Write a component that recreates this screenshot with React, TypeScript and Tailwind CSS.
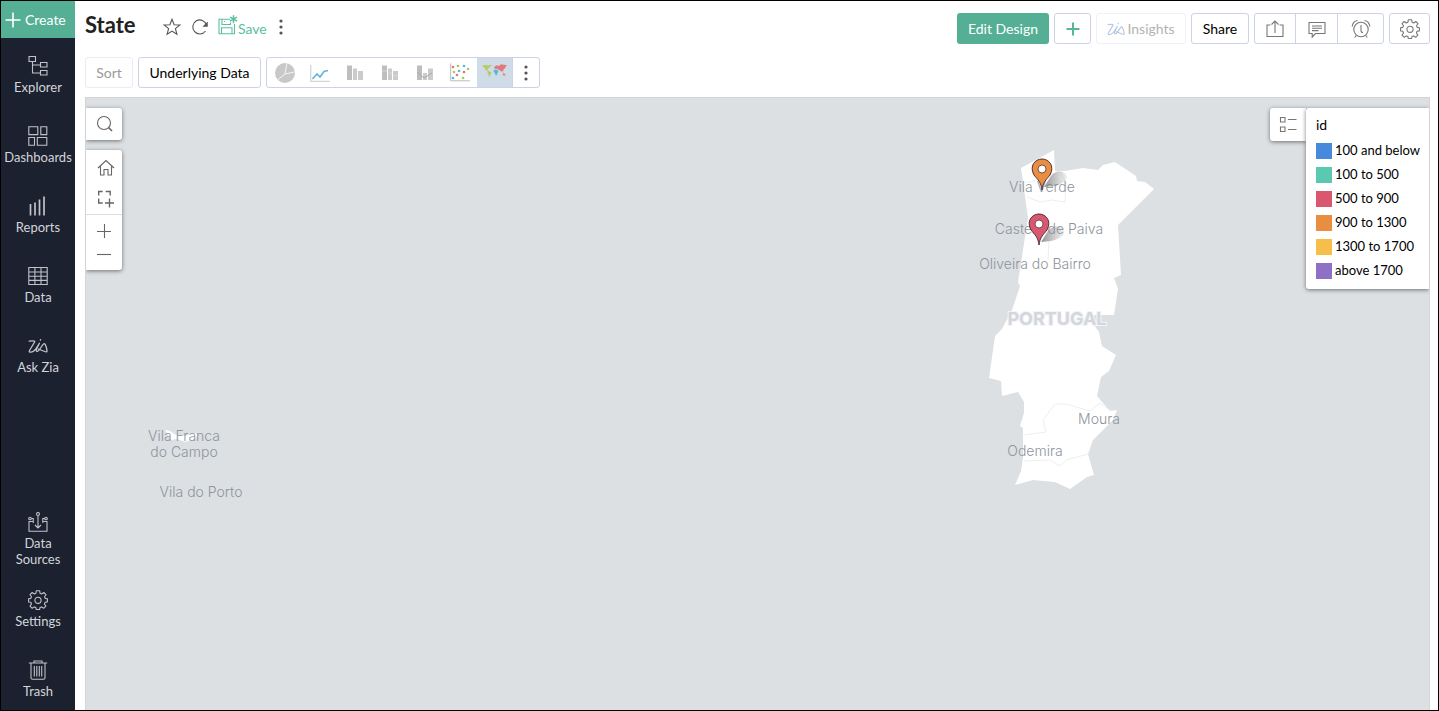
import type { ReactNode } from "react";

type IconProps = { className?: string };

function Svg({ children, box = "0 0 20 20", className = "size-5" }: { children: ReactNode; box?: string; className?: string }) {
  return (
    <svg viewBox={box} className={className} fill="none" stroke="currentColor" strokeWidth="1.1" aria-hidden="true">
      {children}
    </svg>
  );
}

function ExplorerIcon() {
  return (
    <Svg>
      <path d="M1 .5h6.5v5H1zM12.500 6.500h6.500v4.500h-6.500zM12.500 14.500h6.500v4.500h-6.500zM4.500 5.500v11.500h8M4.500 9h8" />
    </Svg>
  );
}

function DashboardsIcon() {
  return (
    <Svg>
      <path d="M.8.800h9v7.800h-9zM12.800.8h6v7.800h-6zM.8 11.500h5.700v7.700H.8zM9.300 11.500h9.500v7.700H9.300z" />
    </Svg>
  );
}

function ReportsIcon() {
  return (
    <Svg>
      <path strokeWidth="1.700" d="M2.500 8v11.500M7 6.500v13M11.500 3.500v16M16 .5v19" />
    </Svg>
  );
}

function TableIcon() {
  return (
    <Svg>
      <path d="M.8 1.500h18.400v17H.8zM.8 6h18.400M.8 10.200h18.400M.8 14.400h18.400M6.900 1.500v17M13 1.500v17" />
    </Svg>
  );
}

function ZiaIcon({ className = "size-5" }: IconProps) {
  return (
    <Svg className={className}>
      <path
        strokeWidth="1.300"
        strokeLinecap="round"
        strokeLinejoin="round"
        d="M1.200 5.200c2-.4 4-.4 5.200-.1.600.2.300.8-.1 1.400L1.500 14.500c-.6 1.200-.1 1.700 1 1.700 2.800 0 5-2.600 6.700-5.400l2.200-3.500-2.700 5.400c-.8 1.700-.5 2.900.7 2.600 2.800-.6 5-8 7-7.600 1.300.4 2.500 5.300 2.600 7.500 0 1-1.200.8-2.300.3l-6.300-2.500M12.300 4.200l.3-.5"
      />
    </Svg>
  );
}

function SourcesIcon() {
  return (
    <Svg>
      <path d="M4.500 9.500H1v9.700h18V9.500h-3.500M10 3.700v12.300M7 13l3 3 3-3M3.200 6.500h2v4.500M16.800 6.500h-2v4.500" />
      <circle cx="10" cy="2" r="1.500" />
      <circle cx="2" cy="6.500" r="1.300" />
      <circle cx="18" cy="6.500" r="1.300" />
    </Svg>
  );
}

function GearIcon() {
  return (
    <Svg>
      <path
        strokeLinejoin="round"
        d="M8.300.8h3.400l.4 2.500 1.600.7 2.100-1.500 2.200 2.200-1.500 2.100.7 1.600 2.200.4v3.100l-2.300.4-.7 1.700 1.500 2.100-2.300 2.200-2-1.400-1.600.6-.4 2.100H8.300l-.4-2.100-1.600-.6-2.100 1.400-2.200-2.200 1.500-2.100-.7-1.700L.6 12V8.800L2.800 8.400l.7-1.600L2 4.700l2.200-2.200L6.300 4l1.600-.7z"
      />
      <circle cx="10" cy="10.300" r="3.100" />
    </Svg>
  );
}

function TrashIcon() {
  return (
    <Svg>
      <path d="M.8 3h18.400M6 3V1h8v2M3 3v14.700c0 1 .6 1.500 1.500 1.500h11c.9 0 1.500-.5 1.500-1.500V3M6.300 6v10.500M8.800 6v10.500M11.300 6v10.500M13.700 6v10.500" />
    </Svg>
  );
}

function NavItem({ label, children, className = "" }: { label: string; children: ReactNode; className?: string }) {
  return (
    <a href="#" className={`flex w-full flex-col items-center gap-[3px] text-center text-[13px] leading-4 text-[#d2d5da] ${className}`}>
      <span className="text-[#bfc2c8]">{children}</span>
      {label}
    </a>
  );
}

function Sidebar() {
  return (
    <aside className="flex w-[74px] shrink-0 flex-col bg-[#1c2130]">
      <button type="button" className="flex h-[37px] shrink-0 items-center gap-1 bg-[#54af94] pl-1 text-sm text-white">
        <Svg box="0 0 16 16" className="size-4">
          <path strokeWidth="1.600" d="M8 .5v15M.5 8h15" />
        </Svg>
        Create
      </button>
      <nav className="flex flex-1 flex-col pt-[18px] pb-[11px]">
        <div className="flex flex-col gap-[31px]">
          <NavItem label="Explorer"><ExplorerIcon /></NavItem>
          <NavItem label="Dashboards"><DashboardsIcon /></NavItem>
          <NavItem label="Reports"><ReportsIcon /></NavItem>
          <NavItem label="Data"><TableIcon /></NavItem>
          <NavItem label="Ask Zia"><ZiaIcon /></NavItem>
        </div>
        <div className="mt-auto flex flex-col">
          <NavItem label="Data Sources" className="mb-[23px] px-3"><SourcesIcon /></NavItem>
          <NavItem label="Settings" className="mb-[31px]"><GearIcon /></NavItem>
          <NavItem label="Trash"><TrashIcon /></NavItem>
        </div>
      </nav>
    </aside>
  );
}

function Dots() {
  return (
    <svg viewBox="0 0 4 18" className="h-[18px] w-1" fill="#555" aria-hidden="true">
      <circle cx="2" cy="3" r="1.600" />
      <circle cx="2" cy="9" r="1.600" />
      <circle cx="2" cy="15" r="1.600" />
    </svg>
  );
}

function TitleBar() {
  return (
    <div className="flex h-[31px] items-start">
      <div className="flex h-7 items-center">
        <h1 className="w-[78px] pb-1 text-[22px] leading-6 font-bold text-[#222]">State</h1>
        <button type="button" aria-label="Favourite" className="mr-2.5 text-[#555]">
          <Svg box="0 0 18 18" className="size-[18px]">
            <path d="M9 1.300l2.100 5.400 5.800.3-4.500 3.600 1.500 5.600L9 13.100l-4.900 3.100 1.500-5.600L1.100 7l5.800-.3z" />
          </Svg>
        </button>
        <button type="button" aria-label="Refresh" className="mr-[9px] text-[#555]">
          <Svg box="0 0 18 18" className="size-[18px]">
            <path d="M14.500 13A7 7 0 1 1 15.500 7" />
            <path fill="currentColor" strokeWidth=".5" d="M16.500 4v4.500H12z" />
          </Svg>
        </button>
        <button type="button" className="mr-3 flex items-center text-sm text-[#5bbf9f]">
          <Svg className="mb-1 size-5">
            <path d="M12 4.200H1v14.500h15.500V9M4 4.500v5h8.500v-2M3.500 18.500v-5.800H14v5.800M6 6.500h1" />
            <path strokeWidth="1.500" d="M15.500.2v8M12 2.200l7 4M12 6.200l7-4" />
          </Svg>
          <span className="pt-1">Save</span>
        </button>
        <button type="button" aria-label="More"><Dots /></button>
      </div>
      <Actions />
    </div>
  );
}

function Actions() {
  const box = "flex h-[31px] items-center justify-center rounded-[3px] border border-[#ccd3e8]";
  return (
    <div className="ml-auto flex gap-[5px] text-sm">
      <button type="button" className="flex h-[31px] w-[92px] items-center justify-center rounded-[3px] bg-[#54af94] text-white">Edit Design</button>
      <button type="button" aria-label="Add" className={`${box} w-[37px] text-[#54b799]`}>
        <Svg box="0 0 14 14" className="size-3.5"><path strokeWidth="2" d="M7 .5v13M.5 7h13" /></Svg>
      </button>
      <button type="button" disabled className="flex h-[31px] w-[90px] items-center justify-center gap-0.5 rounded-[3px] border border-[#eff1f8] text-[#b3b3b3]">
        <ZiaIcon className="size-[18px] text-[#b6c8e3]" />
        Insights
      </button>
      <button type="button" className={`${box} w-[58px] text-black`}>Share</button>
      <div className={`${box} text-[#777]`}>
        <button type="button" aria-label="Export" className="flex h-full w-10 items-center justify-center">
          <Svg><path d="M5.500 6H2v11.500h16V6h-3.500M10 14V2M6.500 5.500L10 2l3.500 3.500" /></Svg>
        </button>
        <button type="button" aria-label="Comments" className="flex h-full w-[42px] items-center justify-center border-l border-[#ccd3e8]">
          <Svg>
            <path d="M2 3.500h16v11H8.500l-3.300 3.500v-3.500H2zM5 7h10M5 9.300h10M5 11.600h6.500" />
          </Svg>
        </button>
        <button type="button" aria-label="Schedule" className="flex h-full w-[46px] items-center justify-center border-l border-[#ccd3e8]">
          <Svg>
            <circle cx="10" cy="10.500" r="7.200" />
            <path d="M10 6v5.500c0 1.500.8 2 2 2M1.200 7.500C1.500 4.500 3.500 2 6.500 1.500M18.800 7.500c-.3-3-2.300-5.500-5.300-6M5.300 16.500l-1.600 2M14.700 16.500l1.600 2" />
          </Svg>
        </button>
      </div>
      <button type="button" aria-label="Settings" className={`${box} w-[41px] text-[#777]`}><GearIcon /></button>
    </div>
  );
}

function PieIcon() {
  return (
    <svg viewBox="0 0 20 20" className="size-5" aria-hidden="true">
      <circle cx="10" cy="10" r="10" fill="#c8c8c8" />
      <path d="M10 11L12 0M10 11l9.500-2M10 11l-7.500 6" stroke="#f4f4f4" fill="none" />
    </svg>
  );
}

function LineIcon() {
  return (
    <svg viewBox="0 0 20 20" className="size-5" fill="none" aria-hidden="true">
      <path d="M.7 2v16.300H20" stroke="#d5d5d5" strokeWidth="1.300" />
      <path d="M2.500 16l4.500-5 3 3 4-5.500 4-1" stroke="#5cb6da" strokeWidth="1.600" />
    </svg>
  );
}

function BarIcon({ kind }: { kind: "bar" | "stack" | "combo" }) {
  return (
    <svg viewBox="0 0 20 20" className="size-5" aria-hidden="true">
      <path d="M2 2.500h5V17H2z" fill="#bebebe" />
      <path d={kind === "combo" ? "M8 10h4v7H8zM13 5.500h5V17h-5z" : "M8 5.500h4V17H8zM13 8h5v9h-5z"} fill="#cbcbcb" />
      {kind === "stack" && <path d="M2 8h5M8 10h4M13 12.500h5" stroke="#dedede" strokeWidth=".7" />}
      {kind === "combo" && <path d="M2 9l7 6 8-5" stroke="#aaa" fill="none" />}
    </svg>
  );
}

const scatter = [
  [3, 4, "#e57373"], [8, 3, "#a9c95b"], [14, 3, "#5cb6da"], [18, 6, "#a9c95b"], [4, 9, "#a9c95b"],
  [9, 8, "#5cb6da"], [14, 9, "#e57373"], [7, 12, "#e57373"], [3, 15, "#5cb6da"], [13, 15, "#a9c95b"],
] as const;

function ScatterIcon() {
  return (
    <svg viewBox="0 0 20 20" className="size-5" aria-hidden="true">
      <path d="M.7.500v17.300H20" stroke="#bbb" fill="none" />
      {scatter.map(([x, y, fill]) => <circle key={`${x}-${y}`} cx={x} cy={y} r="1.300" fill={fill} />)}
    </svg>
  );
}

function WorldIcon() {
  return (
    <svg viewBox="0 0 26 16" className="mb-1 h-4 w-[26px]" aria-hidden="true">
      <path fill="#b6cc62" d="M.5 2.500l3-.5 3 .4 2.500-.7 1 .5-1.800 1.600L7 4.800 6 6l-1 .4 1.500 1.600 2.300 1 .6 1.200-1.300 1.700-.6 2.300-.8-.6-.5-2.800-.9-1.500.3-1.200L3.500 7 2.300 4.500.8 3.800z" />
      <path fill="#5cb6da" d="M11.800 7l2.200-.5 1.600.6.8 1.200-.8 1.700-.9 2.300-1 .3-.8-2.700-1.200-1z" />
      <path fill="#e3787a" d="M12 5l1-1.700 1.800-1 2 .6L19 1.300l4.500.7 1.500.7-1.600 1.200-.5 1.600-1.400.8L21.300 8.500l-1.200-.5-.9.8L18 7.200l-1.400-.3-1-1.100-2 .1zM20.500 11l1.700-.6 1.300 1.100-.5 1.100-2-.3zM20 9l1.800.7-.4.5z" />
    </svg>
  );
}

function ChartBar() {
  const cell = "flex h-full w-[35px] items-center justify-center";
  return (
    <div className="mt-[13px] flex h-[31px] gap-[5px] text-sm">
      <button type="button" disabled className="w-12 rounded-[3px] border border-[#e9ecf7] text-[#999]">Sort</button>
      <button type="button" className="w-[123px] rounded-[3px] border border-[#ccd3e8] text-black">Underlying Data</button>
      <div className="flex items-center overflow-hidden rounded-[3px] border border-[#ccd3e8]">
        <button type="button" aria-label="Pie chart" className={cell}><PieIcon /></button>
        <button type="button" aria-label="Line chart" className={cell}><LineIcon /></button>
        <button type="button" aria-label="Bar chart" className={cell}><BarIcon kind="bar" /></button>
        <button type="button" aria-label="Stacked chart" className={cell}><BarIcon kind="stack" /></button>
        <button type="button" aria-label="Combination chart" className={cell}><BarIcon kind="combo" /></button>
        <button type="button" aria-label="Scatter chart" className={cell}><ScatterIcon /></button>
        <button type="button" aria-label="Map chart" aria-pressed="true" className={`${cell} bg-[#d0dbe8]`}><WorldIcon /></button>
        <button type="button" aria-label="More charts" className="flex h-full w-[27px] items-center justify-center border-l border-[#ccd3e8]"><Dots /></button>
      </div>
    </div>
  );
}

const places = [
  { name: "Vila Verde", x: 1042, y: 192 },
  { name: "Castelo de Paiva", x: 1049, y: 234 },
  { name: "Oliveira do Bairro", x: 1035, y: 269 },
  { name: "Moura", x: 1099, y: 424 },
  { name: "Odemira", x: 1035, y: 456 },
  { name: "Vila Franca", x: 184, y: 441 },
  { name: "do Campo", x: 184, y: 457 },
  { name: "Vila do Porto", x: 201, y: 497 },
];

function Pin({ x, y, fill }: { x: number; y: number; fill: string }) {
  return (
    <g transform={`translate(${x} ${y})`}>
      <path d="M2-3L9-14q5-6 12-4 6 3 3 8-4 4-12 6z" fill="url(#pin-shadow)" />
      <path d="M0 0C-1-8-4-10-8-15c-5-9 1-16 8-16s13 7 8 16C4-10 1-8 0 0z" fill={fill} stroke="#54313a" />
      <circle cy="-21" r="4" fill="#fff" stroke="#54313a" strokeWidth=".8" />
    </g>
  );
}

function MapCanvas() {
  return (
    <svg viewBox="86 98 1343 612" preserveAspectRatio="xMidYMid slice" className="absolute inset-0 size-full" role="img" aria-label="Map of Portugal">
      <defs>
        <linearGradient id="pin-shadow" x1="0" y1="0" x2="1" y2="0">
          <stop offset="0" stopColor="#777" stopOpacity=".8" />
          <stop offset="1" stopColor="#999" stopOpacity=".15" />
        </linearGradient>
      </defs>
      <path
        fill="#fff"
        d="M1054 150L1055 171L1065 171L1083 168L1098 170L1103 165L1115 162L1136 176L1137 181L1145 182L1154 189L1118 225L1121 275L1114 278L1118 289L1114 315H1093L1094 325L1099 332L1102 346L1116 355L1109 371L1101 377L1097 396L1110 411L1117 410L1113 420L1093 440L1088 454L1094 475L1087 477L1070 489L1055 482L1033 480L1015 485L1021 471L1023 458V428L1020 426L1024 413V402L1018 392L1002 396L1001 381L989 378L995 336L1002 329L1012 310L1020 286L1018 282L1028 218L1021 168Z"
      />
      <path fill="#fff" d="M165 430l5 1 6 4 9 1 8-3 5 1-3 5-10 3-8-3-6 1z" />
      <path
        fill="none"
        stroke="#eceef0"
        d="M1026 183l14-4 20-8 6 12-1 19-13-2-12 2-13-5M1049 240l-1 20M1024 435l22-3-3-12 12-16h11l24 7 10-8 11 8M1024 461l26-1 10 6 6-6 22-6"
      />
      <text x="1057" y="325" textAnchor="middle" fill="#d3d7dd" stroke="#f3f4f6" strokeWidth="2" paintOrder="stroke" className="font-['Inter',sans-serif] text-[18px] font-bold">
        PORTUGAL
      </text>
      <g fill="#8e949d" textAnchor="middle" className="font-['Inter',sans-serif] text-[14px] font-light">
        {places.map((p) => <text key={p.name} x={p.x} y={p.y}>{p.name}</text>)}
      </g>
      <Pin x={1042} y={190} fill="#e98d41" />
      <Pin x={1039} y={245} fill="#d9576f" />
    </svg>
  );
}

function MapControls() {
  const card = "w-9 rounded-r-[3px] bg-white text-[#666] shadow-[0_1px_4px_rgba(0,0,0,0.5)]";
  return (
    <div className="absolute top-2.5 left-0 flex flex-col gap-2.5">
      <button type="button" aria-label="Search map" className={`${card} flex h-8 items-center justify-center`}>
        <Svg box="0 0 18 18" className="size-[18px]">
          <circle cx="9" cy="8" r="6.500" />
          <path strokeWidth="1.600" d="M13.500 12.500l3.500 3.500" />
        </Svg>
      </button>
      <div className={`${card} flex flex-col`}>
        <button type="button" aria-label="Home" className="flex h-8 items-end justify-center pl-1">
          <Svg box="0 0 18 18" className="mb-[5px] size-[18px]">
            <path d="M1 9l8-7.500L17 9M3.500 7.500V16H7v-5.500h4V16h3.500V7.500" />
          </Svg>
        </button>
        <button type="button" aria-label="Select area" className="flex h-[33px] items-center justify-center border-b border-[#ddd] pt-0.5 pl-1">
          <Svg box="0 0 18 18" className="size-[18px]">
            <path strokeWidth="1.400" d="M1.700 5.500v-4h4M8.700 1.500h4.500v4M1.700 8.500v4.500h4M12.500 8.500v9M8 13h9" />
          </Svg>
        </button>
        <button type="button" aria-label="Zoom in" className="flex h-8 items-center justify-center">
          <Svg box="0 0 14 14" className="size-3.5"><path d="M7.500 0v14M0 7.500h14" /></Svg>
        </button>
        <button type="button" aria-label="Zoom out" className="flex h-[23px] items-start justify-center">
          <Svg box="0 0 14 14" className="size-3.5"><path d="M0 7.500h14" /></Svg>
        </button>
      </div>
    </div>
  );
}

const legend = [
  { label: "100 and below", color: "bg-[#478adb]" },
  { label: "100 to 500", color: "bg-[#5bc8b0]" },
  { label: "500 to 900", color: "bg-[#d9576f]" },
  { label: "900 to 1300", color: "bg-[#e98d41]" },
  { label: "1300 to 1700", color: "bg-[#f6bf4b]" },
  { label: "above 1700", color: "bg-[#8e71c7]" },
];

function Legend() {
  return (
    <div className="absolute top-2.5 right-0 flex items-start">
      <button type="button" aria-label="Toggle legend" className="flex h-[33px] w-9 items-center justify-center rounded-l-[3px] bg-white text-[#777] shadow-[0_1px_4px_rgba(0,0,0,0.5)]">
        <Svg box="0 0 18 18" className="size-[18px]">
          <path d="M1.500 1.500h4.500V6H1.500zM1.500 11h4.500v4.500H1.500zM9 3.500h8.500M9 13.500h8.500" />
        </Svg>
      </button>
      <section className="relative w-[123px] rounded-l-[3px] bg-white px-2.5 pt-[7px] pb-1.5 text-[13px] text-black shadow-[0_1px_4px_rgba(0,0,0,0.5)]">
        <h2 className="pb-1 text-sm leading-5 font-normal">id</h2>
        <ul>
          {legend.map((item) => (
            <li key={item.label} className="flex h-6 items-center gap-[3px] whitespace-nowrap">
              <span className={`size-4 shrink-0 ${item.color}`} />
              {item.label}
            </li>
          ))}
        </ul>
      </section>
    </div>
  );
}

export default function App() {
  return (
    <div className="flex min-h-screen border border-black bg-white font-['Lato',sans-serif]">
      <Sidebar />
      <main className="flex min-w-0 flex-1 flex-col pt-3 pr-2 pl-2.5">
        <TitleBar />
        <ChartBar />
        <div className="relative mt-[9px] flex-1 overflow-hidden border border-b-0 border-[#d2d5d7] bg-[#dce0e3]">
          <MapCanvas />
          <MapControls />
          <Legend />
        </div>
      </main>
    </div>
  );
}
